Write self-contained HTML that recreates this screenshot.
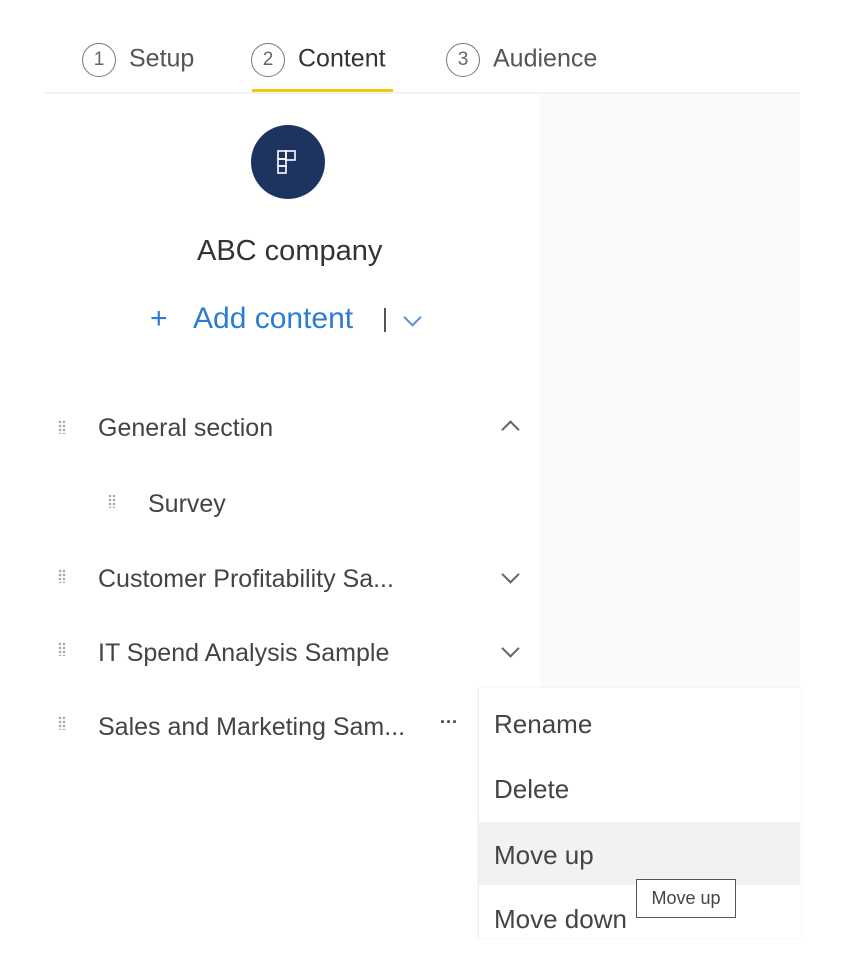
<!DOCTYPE html>
<html><head><meta charset="utf-8"><style>
body{margin:0;width:844px;height:974px;background:#fff;font-family:"Liberation Sans",sans-serif;color:#333;position:relative;overflow:hidden}
.a{position:absolute;white-space:nowrap}
.t{font-size:25px;color:#444}
.grip{position:absolute;width:8px;height:14px;background-image:radial-gradient(circle,#aaa 1.2px,transparent 1.4px);background-size:4px 4px}
.circ{display:inline-block;width:34px;height:34px;border:1.5px solid #777;border-radius:50%;text-align:center;line-height:32px;font-size:19px;color:#666;margin-right:13px;vertical-align:middle;box-sizing:border-box}
.tab{font-size:25px;color:#555;top:43px}
.chev{position:absolute;width:11px;height:11px;border-left:2px solid #666;border-top:2px solid #666}
</style></head><body>
<div class="a tab" style="left:82px"><span class="circ">1</span>Setup</div>
<div class="a tab" style="left:251px;color:#333"><span class="circ">2</span>Content</div>
<div class="a" style="left:252px;top:89px;width:141px;height:4px;background:#f2c811"></div>
<div class="a tab" style="left:446px"><span class="circ">3</span>Audience</div>
<div class="a" style="left:45px;top:92px;width:755px;height:2px;background:#f3f3f3"></div>
<div class="a" style="left:540px;top:94px;width:260px;height:594px;background:#fafafa"></div>
<div class="a" style="left:251px;top:125px;width:74px;height:74px;border-radius:50%;background:#1d3461"></div>
<svg class="a" style="left:277px;top:150px" width="24" height="26" viewBox="0 0 24 26" fill="none" stroke="#fff" stroke-width="1.6"><rect x="1" y="1" width="8" height="8"/><rect x="9" y="1" width="9" height="9"/><rect x="1" y="9" width="8" height="7"/><rect x="1" y="16" width="8" height="7"/></svg>
<div class="a" style="left:197px;top:235px;font-size:29px;color:#333">ABC company</div>
<div class="a" style="left:150px;top:302px;font-size:30px;color:#2b7cd3">+</div>
<div class="a" style="left:193px;top:302px;font-size:30px;color:#2b7cd3">Add content</div>
<div class="a" style="left:384px;top:308px;width:2px;height:24px;background:#555"></div>
<div class="chev" style="left:406px;top:311px;transform:rotate(225deg);border-color:#5b8fd6"></div>
<div class="grip" style="left:58px;top:420px"></div>
<div class="a t" style="left:98px;top:414px">General section</div>
<div class="chev" style="left:504px;top:423px;transform:rotate(45deg)"></div>
<div class="grip" style="left:108px;top:494px"></div>
<div class="a t" style="left:148px;top:490px">Survey</div>
<div class="grip" style="left:58px;top:569px"></div>
<div class="a t" style="left:98px;top:565px">Customer Profitability Sa...</div>
<div class="chev" style="left:504px;top:568px;transform:rotate(225deg)"></div>
<div class="grip" style="left:58px;top:642px"></div>
<div class="a t" style="left:98px;top:639px">IT Spend Analysis Sample</div>
<div class="chev" style="left:504px;top:642px;transform:rotate(225deg)"></div>
<div class="grip" style="left:58px;top:716px"></div>
<div class="a t" style="left:98px;top:713px">Sales and Marketing Sam...</div>
<div class="a" style="left:440px;top:712px;font-size:18px;color:#444;font-weight:bold">···</div>
<div class="a" style="left:478px;top:688px;width:322px;height:250px;background:#fff;border-left:1px solid #eee;box-shadow:0 0 2px rgba(0,0,0,.08)"></div>
<div class="a" style="left:479px;top:822px;width:321px;height:63px;background:#f3f2f1"></div>
<div class="a t" style="left:494px;top:709px;font-size:26px">Rename</div>
<div class="a t" style="left:494px;top:774px;font-size:26px">Delete</div>
<div class="a t" style="left:494px;top:840px;font-size:26px">Move up</div>
<div class="a t" style="left:494px;top:904px;font-size:26px">Move down</div>
<div class="a" style="left:636px;top:879px;width:100px;height:39px;border:1.5px solid #555;background:#fff;box-sizing:border-box;font-size:18px;color:#444;text-align:center;line-height:36px">Move up</div>
</body></html>
